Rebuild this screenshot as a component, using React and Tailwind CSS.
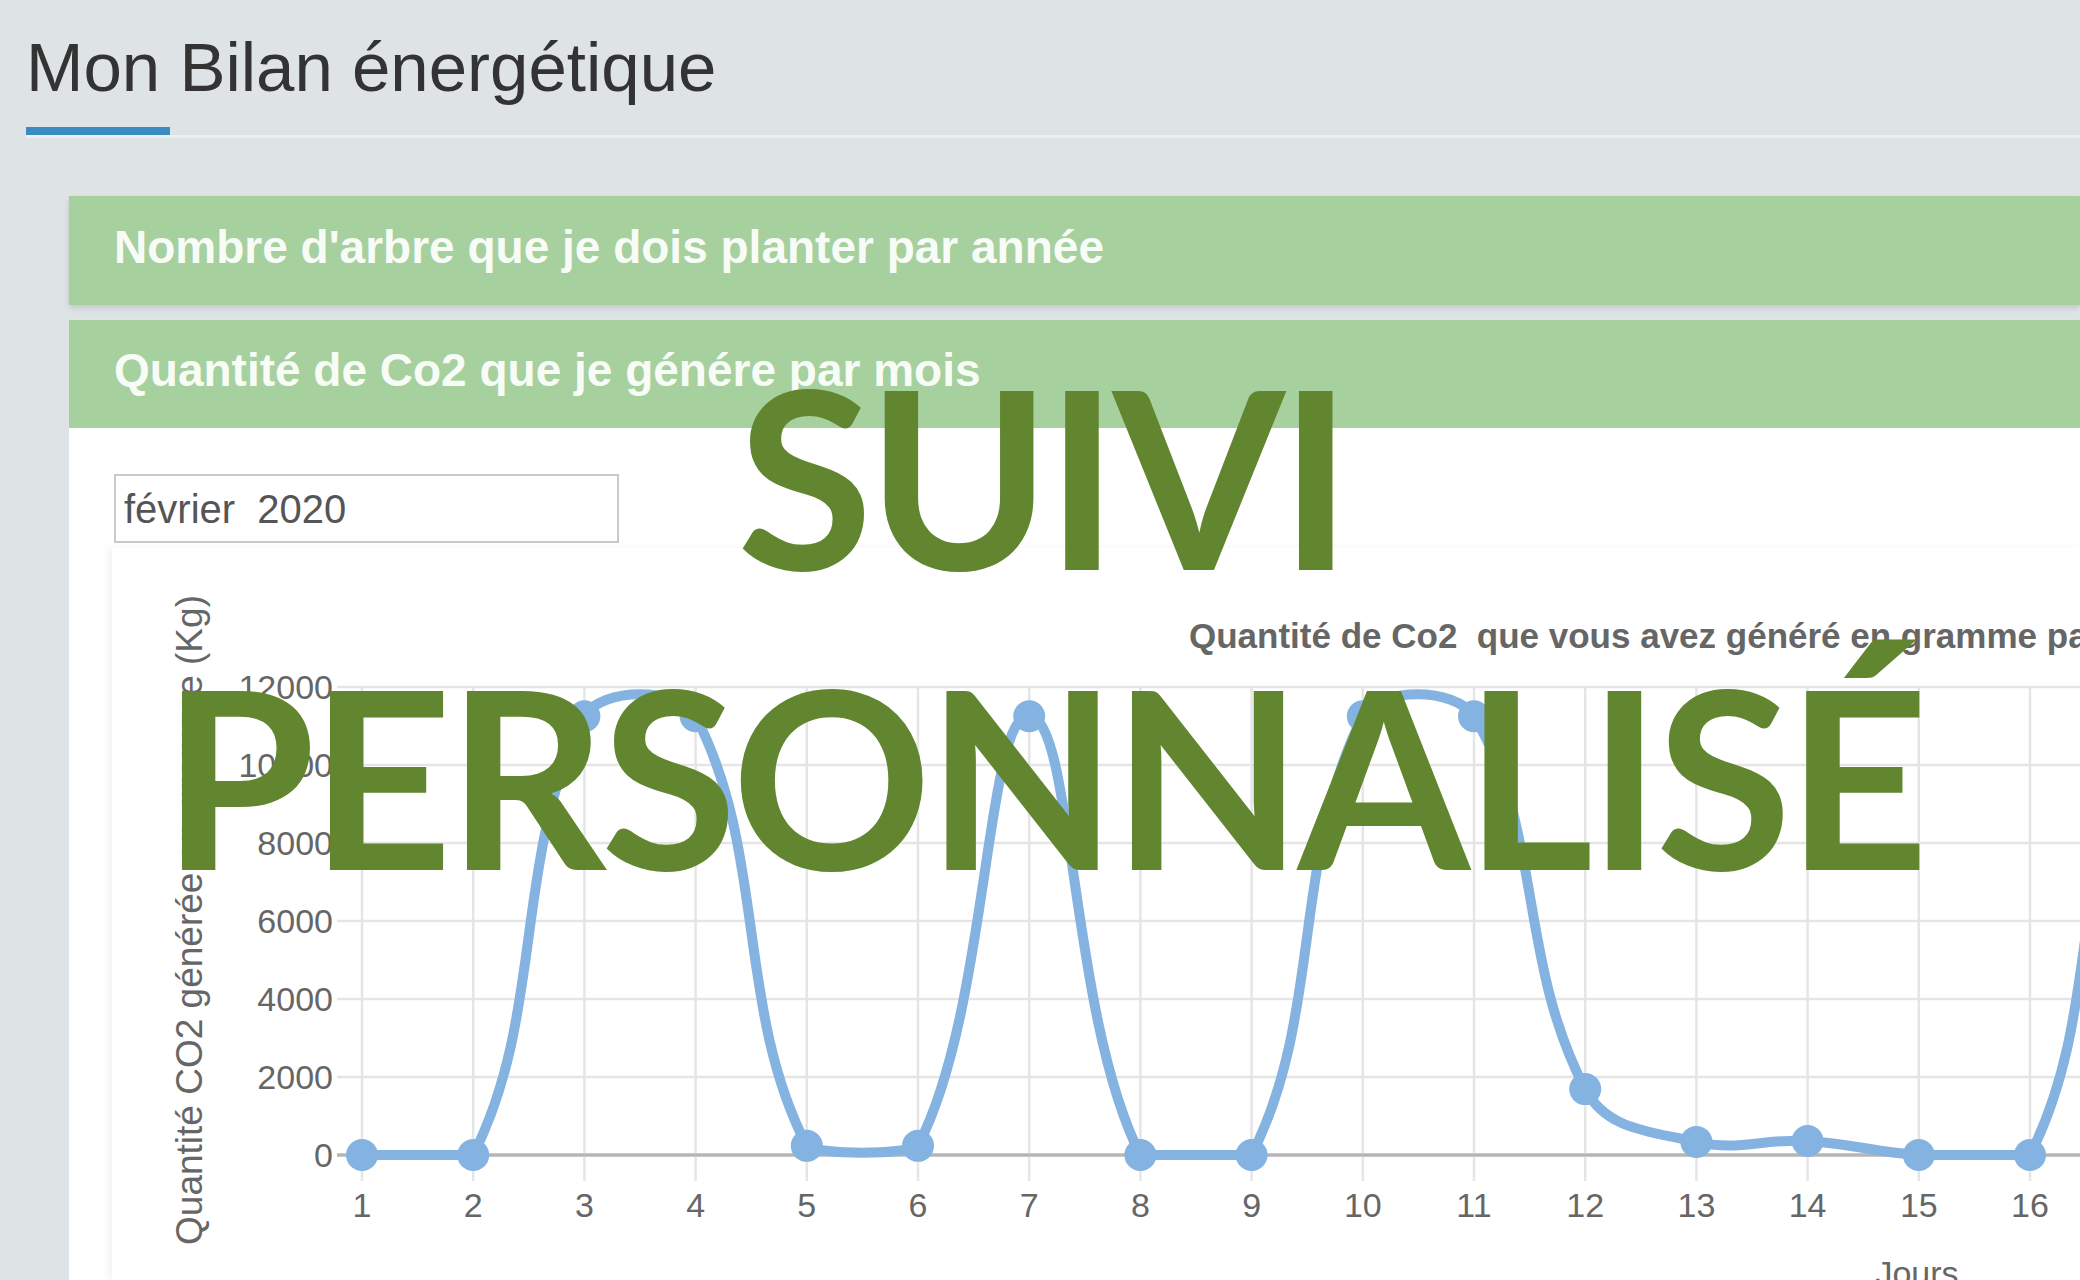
import React from "react";

const values = [0, 0, 11250, 11250, 235, 235, 11250, 0, 0, 11250, 11250, 1690, 335, 360, 0, 0, 11250, 11250];

// chart geometry (inside svg, offset from chart box at 112,548)
const OX = 112;
const OY = 548;
const left = 362 - OX;
const step = 111.2;
const top = 687 - OY;
const bottom = 1155 - OY;
const yTicks = [12000, 10000, 8000, 6000, 4000, 2000, 0];

const toY = (v) => bottom - (v / 12000) * (bottom - top);

const buildPath = () => {
  const pts = values.map((v, i) => ({ x: left + i * step, y: toY(v) }));
  const t = 0.4;
  const cps = pts.map((cur, i) => {
    const prev = pts[i - 1] || cur;
    const next = pts[i + 1] || cur;
    const d01 = Math.hypot(cur.x - prev.x, cur.y - prev.y);
    const d12 = Math.hypot(next.x - cur.x, next.y - cur.y);
    let s01 = d01 / (d01 + d12);
    let s12 = d12 / (d01 + d12);
    if (isNaN(s01)) s01 = 0;
    if (isNaN(s12)) s12 = 0;
    const clamp = (y) => Math.min(bottom, Math.max(top, y));
    return {
      prev: { x: cur.x - t * s01 * (next.x - prev.x), y: clamp(cur.y - t * s01 * (next.y - prev.y)) },
      next: { x: cur.x + t * s12 * (next.x - prev.x), y: clamp(cur.y + t * s12 * (next.y - prev.y)) },
    };
  });
  let d = `M ${pts[0].x} ${pts[0].y}`;
  for (let i = 1; i < pts.length; i++) {
    const a = cps[i - 1].next;
    const b = cps[i].prev;
    d += ` C ${a.x} ${a.y} ${b.x} ${b.y} ${pts[i].x} ${pts[i].y}`;
  }
  return { d, pts };
};

const Chart = () => {
  const { d, pts } = buildPath();
  return (
    <svg width="1968" height="732" className="block">
      {/* horizontal grid */}
      {yTicks.map((v) => (
        <line
          key={v}
          x1={337 - OX}
          x2={1968}
          y1={toY(v)}
          y2={toY(v)}
          stroke={v === 0 ? "#b5b5b5" : "#e5e5e5"}
          strokeWidth={v === 0 ? 3 : 2.5}
        />
      ))}
      {/* vertical grid */}
      {values.map((_, i) => (
        <line
          key={i}
          x1={left + i * step}
          x2={left + i * step}
          y1={top}
          y2={1181 - OY}
          stroke="#e5e5e5"
          strokeWidth="2.5"
        />
      ))}
      <line x1={337 - OX} x2={1968} y1={bottom} y2={bottom} stroke="#b5b5b5" strokeWidth="3" />
      {yTicks.map((v) => (
        <text key={v} x={333 - OX} y={toY(v) + 12} textAnchor="end" fontSize="34" fill="#666">
          {v}
        </text>
      ))}
      {values.map((_, i) => (
        <text key={i} x={left + i * step} y={1217 - OY} textAnchor="middle" fontSize="34" fill="#666">
          {i + 1}
        </text>
      ))}
      <text
        x={0}
        y={0}
        fontSize="37"
        fill="#666"
        textAnchor="middle"
        transform={`translate(${202 - OX} ${920 - OY}) rotate(-90)`}
      >
        Quantité CO2 générée en gramme (Kg)
      </text>
      <text x={1189 - OX} y={648 - OY} fontSize="35" fontWeight="bold" fill="#666" style={{ whiteSpace: "pre" }}>
        {"Quantité de Co2  que vous avez généré en gramme par jour"}
      </text>
      <text x={1917 - OX} y={1285 - OY} textAnchor="middle" fontSize="34" fill="#666">
        Jours
      </text>
      <path d={d} fill="none" stroke="#85b3e1" strokeWidth="10" />
      {pts.map((p, i) => (
        <circle key={i} cx={p.x} cy={p.y} r="16" fill="#85b3e1" />
      ))}
    </svg>
  );
};

export default function App() {
  return (
    <div className="relative w-[2080px] h-[1280px] overflow-hidden bg-[#dee3e6] font-['Liberation_Sans',Arial,sans-serif]">
      <div className="pl-[26px] pt-[33px]">
        <h1 className="text-[69px] leading-none text-[#333]">Mon Bilan énergétique</h1>
        <div className="mt-[25px]">
          <div className="w-[144px] h-[8px] bg-[#3a8bc0]" />
          <div className="h-[3px] bg-[#eceef0]" />
        </div>
      </div>

      <div className="ml-[69px] mt-[58px] flex flex-col">
        <div className="h-[109px] bg-[#a7d09f] pl-[45px] pt-[28px] text-[46px] leading-none font-bold text-[#f8fcf7] shadow-[0_3px_6px_rgba(0,0,0,0.12)]">
          Nombre d'arbre que je dois planter par année
        </div>
        <div className="mt-[15px] h-[108px] bg-[#a7d09f] pl-[45px] pt-[27px] text-[46px] leading-none font-bold text-[#f8fcf7]">
          Quantité de Co2 que je génére par mois
        </div>
        <div className="h-[900px] bg-white pt-[46px] pl-[45px]">
          <div className="w-[505px] h-[69px] border-2 border-[#cacaca] pl-[8px] flex items-center text-[40px] text-[#555] whitespace-pre">
            {"février  2020"}
          </div>
          <div className="mt-[5px] -ml-[2px] bg-white shadow-[-4px_0_8px_rgba(0,0,0,0.05)]">
            <Chart />
          </div>
        </div>
      </div>

      <div className="absolute left-[737px] top-[350px] text-[248px] leading-none font-bold tracking-[-6px] text-[#62862f] font-['Lato',sans-serif]">
        SUIVI
      </div>
      <div className="absolute left-[162px] top-[650px] text-[248px] leading-none font-bold tracking-[-5.5px] text-[#62862f] font-['Lato',sans-serif]">
        PERSONNALISÉ
      </div>
    </div>
  );
}
